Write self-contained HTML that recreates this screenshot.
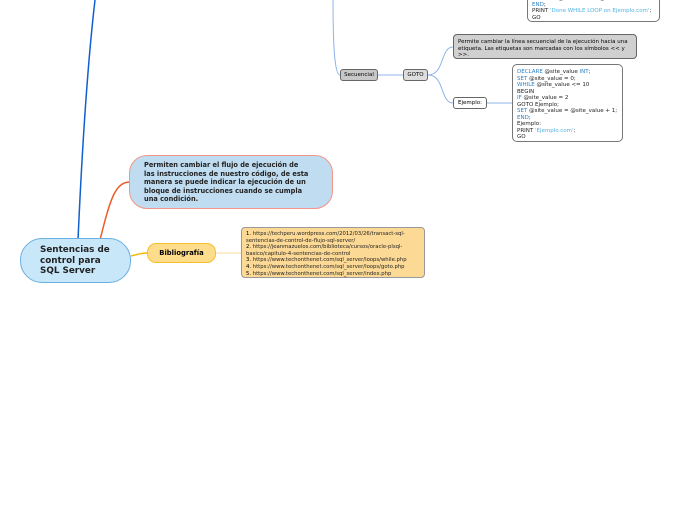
<!DOCTYPE html><html><head><meta charset="utf-8"><style>
body{margin:0;width:697px;height:520px;background:#fff;position:relative;overflow:hidden;font-family:"DejaVu Sans","Liberation Sans",sans-serif;}
.b{position:absolute;box-sizing:border-box;}
.code{font-size:5.5px;line-height:6.5px;color:#222;white-space:nowrap}
.k{color:#2a7fc0}.s{color:#4fb3e8}
a{color:#222;}
</style></head><body>
<svg class="b" style="left:0;top:0" width="697" height="520">
<path d="M78 240 C82 150 88 60 95 0" stroke="#1060d0" stroke-width="1.5" fill="none"/>
<path d="M100 240 C110 200 115 182 130 182" stroke="#f05a28" stroke-width="1.5" fill="none"/>
<path d="M131 256 C140 254 140 253 147 253" stroke="#f5b800" stroke-width="1.5" fill="none"/>
<path d="M215 253 L241 253" stroke="#f8dc9a" stroke-width="1"/>
<path d="M333 0 C333 50 335 75 340 75" stroke="#8fb4e8" stroke-width="1" fill="none"/>
<path d="M378 75 L403 75" stroke="#8fb4e8" stroke-width="1"/>
<path d="M428 75 C445 75 440 47 453 47 M428 75 C445 75 440 103 453 103" stroke="#8fb4e8" stroke-width="1" fill="none"/>
<path d="M487 103 L512 103" stroke="#8fb4e8" stroke-width="1"/>
</svg>
<div class="b code" style="left:527px;top:-9px;width:133px;height:31px;border:1px solid #777;border-radius:5px;background:#fff;padding:3px 4px">SET @site_value = @site_value + 1;<br><span class="k">END</span>;<br>PRINT <span class="s">'Done WHILE LOOP on Ejemplo.com'</span>;<br>GO</div>
<div class="b" style="left:340px;top:69px;width:38px;height:12px;background:#c8c8c8;border:1px solid #666;border-radius:3px;font-size:5.5px;text-align:center;line-height:10px">Secuencial</div>
<div class="b" style="left:403px;top:69px;width:25px;height:12px;background:#ddd;border:1px solid #666;border-radius:3px;font-size:5.5px;text-align:center;line-height:10px">GOTO</div>
<div class="b" style="left:453px;top:34px;width:184px;height:25px;background:#d0d0d0;border:1px solid #666;border-radius:4px;font-size:5.5px;line-height:6.5px;padding:4px 4px">Permite cambiar la línea secuencial de la ejecución hacia una etiqueta. Las etiquetas son marcadas con los símbolos &lt;&lt; y &gt;&gt;.</div>
<div class="b" style="left:453px;top:97px;width:34px;height:12px;background:#fff;border:1px solid #666;border-radius:3px;font-size:5.5px;text-align:center;line-height:10px">Ejemplo:</div>
<div class="b code" style="left:512px;top:64px;width:111px;height:78px;border:1px solid #777;border-radius:5px;background:#fff;padding:4px 4px"><span class="k">DECLARE</span> @site_value <span class="k">INT</span>;<br><span class="k">SET</span> @site_value = 0;<br><span class="k">WHILE</span> @site_value &lt;= 10<br>BEGIN<br><span class="k">IF</span> @site_value = 2<br>GOTO Ejemplo;<br><span class="k">SET</span> @site_value = @site_value + 1;<br><span class="k">END</span>;<br>Ejemplo:<br>PRINT <span class="s">'Ejemplo.com'</span>;<br>GO</div>
<div class="b" style="left:129px;top:155px;width:204px;height:54px;background:#c0dcf0;border:1.5px solid #f0968a;border-radius:18px;font-size:6.6px;font-weight:bold;line-height:8.6px;padding:5px 0 0 14px;color:#222;white-space:nowrap">Permiten cambiar el flujo de ejecución de<br>las instrucciones de nuestro código, de esta<br>manera se puede indicar la ejecución de un<br>bloque de instrucciones cuando se cumpla<br>una condición.</div>
<div class="b" style="left:20px;top:238px;width:111px;height:45px;background:#c8e8fa;border:1.5px solid #6ab0e0;border-radius:22px;font-size:8.8px;font-weight:bold;line-height:10.5px;padding:6px 0 0 19px;color:#222">Sentencias de<br>control para<br>SQL Server</div>
<div class="b" style="left:147px;top:243px;width:69px;height:20px;background:#fddc8c;border:1px solid #f5c030;border-radius:9px;font-size:6.8px;font-weight:bold;text-align:center;line-height:18px">Bibliografía</div>
<div class="b" style="left:241px;top:227px;width:184px;height:51px;background:#fcd995;border:1px solid #999;border-radius:4px;font-size:5.3px;line-height:6.6px;padding:3px 4px;white-space:nowrap">1. <a>https://techperu.wordpress.com/2012/03/26/transact-sql-</a><br><a>sentencias-de-control-de-flujo-sql-server/</a><br>2. <a>https://jeanmazuelos.com/biblioteca/cursos/oracle-plsql-</a><br><a>basico/capitulo-4-sentencias-de-control</a><br>3. <a>https://www.techonthenet.com/sql_server/loops/while.php</a><br>4. <a>https://www.techonthenet.com/sql_server/loops/goto.php</a><br>5. <a>https://www.techonthenet.com/sql_server/index.php</a></div>
</body></html>
